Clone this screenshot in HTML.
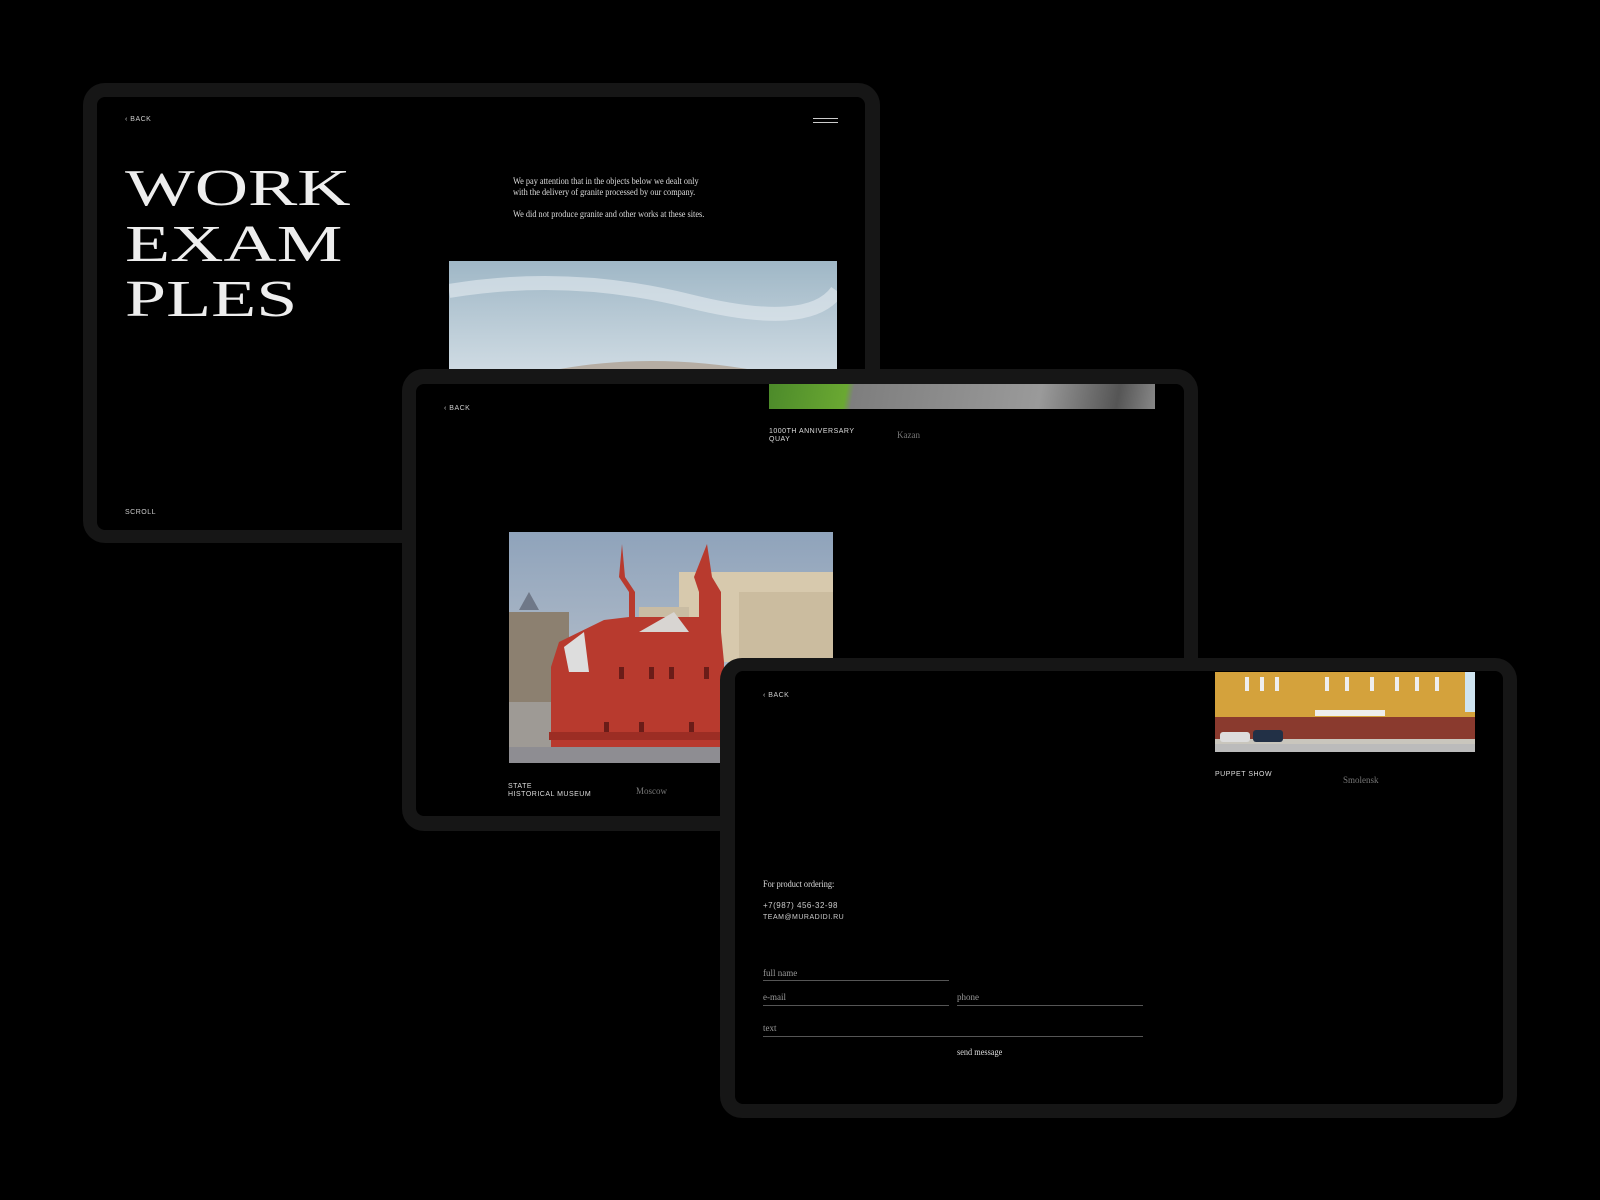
<!DOCTYPE html>
<html><head><meta charset="utf-8"><style>
*{margin:0;padding:0;box-sizing:border-box}
body{width:1600px;height:1200px;background:#000;position:relative;overflow:hidden;font-family:"Liberation Serif",serif;color:#ddd}
.frame{position:absolute;background:#161616;border-radius:22px}
.scr{position:absolute;background:#000;border-radius:8px;overflow:hidden}
.a{position:absolute;white-space:nowrap}
.sc{font-family:"Liberation Sans",sans-serif;font-size:7px;letter-spacing:.5px;color:#ccc}
.big{font-family:"Liberation Serif",serif;font-size:52px;line-height:56px;color:#eee;transform:scaleX(1.42);transform-origin:left top}
.p{font-size:9px;color:#ddd;transform:scaleX(.92);transform-origin:left top}
.gray{color:#777;font-size:9px}
.ln{position:absolute;height:1px;background:#555}
</style></head><body>

<!-- tablet 1 -->
<div class="frame" style="left:83px;top:83px;width:797px;height:460px"></div>
<div class="scr" style="left:97px;top:97px;width:768px;height:433px">
  <div class="a sc" style="left:28px;top:19px">‹ BACK</div>
  <div class="a" style="left:716px;top:21px;width:25px;height:1px;background:#ccc"></div>
  <div class="a" style="left:716px;top:25px;width:25px;height:1px;background:#ccc"></div>
  <div class="a big" style="left:28px;top:64px">WORK</div>
  <div class="a big" style="left:28px;top:120px">EXAM</div>
  <div class="a big" style="left:28px;top:175px">PLES</div>
  <div class="a p" style="left:416px;top:79px;line-height:11px">We pay attention that in the objects below we dealt only<br>with the delivery of granite processed by our company.<br><br>We did not produce granite and other works at these sites.</div>
  <svg class="a" style="left:352px;top:164px" width="388" height="110" viewBox="0 0 388 110">
    <defs><linearGradient id="s1" x1="0" y1="0" x2="0" y2="1"><stop offset="0" stop-color="#9fb7c6"/><stop offset="1" stop-color="#cfdbe3"/></linearGradient></defs>
    <rect width="388" height="110" fill="url(#s1)"/>
    <path d="M0 30 Q120 10 240 40 T388 30" stroke="#e4ebf0" stroke-width="14" fill="none" opacity=".6"/>
    <path d="M100 110 Q200 90 310 110Z" fill="#b5ada3"/>
  </svg>
  <div class="a sc" style="left:28px;top:412px">SCROLL</div>
</div>

<!-- tablet 2 -->
<div class="frame" style="left:402px;top:369px;width:796px;height:462px"></div>
<div class="scr" style="left:416px;top:384px;width:768px;height:432px">
  <div class="a sc" style="left:28px;top:21px">‹ BACK</div>
  <div class="a" style="left:353px;top:0;width:386px;height:25px;background:linear-gradient(100deg,#4c8a2a 0,#6aa832 20%,#7e7e7e 22%,#9a9a9a 70%,#555 90%,#888 100%)"></div>
  <div class="a sc" style="left:353px;top:44px;line-height:8px;color:#ddd">1000TH ANNIVERSARY<br>QUAY</div>
  <div class="a gray" style="left:481px;top:46px">Kazan</div>
  <svg class="a" style="left:93px;top:148px" width="324" height="231" viewBox="0 0 324 231">
    <defs><linearGradient id="s2" x1="0" y1="0" x2="0" y2="1"><stop offset="0" stop-color="#8fa3bb"/><stop offset="1" stop-color="#c7ccd2"/></linearGradient></defs>
    <rect width="324" height="231" fill="url(#s2)"/>
    <rect x="0" y="80" width="60" height="100" fill="#8c8070"/>
    <path d="M10 78 L20 60 L30 78Z" fill="#6f7888"/>
    <rect x="170" y="40" width="154" height="90" fill="#d7c9ad"/>
    <rect x="230" y="60" width="94" height="70" fill="#cbbc9f"/>
    <rect x="130" y="75" width="50" height="30" fill="#c9bca3"/>
    <rect x="0" y="170" width="50" height="61" fill="#9e9a95"/>
    <path d="M42 135 L50 110 L95 88 L120 85 L120 60 L110 45 L113 12 L116 45 L126 60 L126 85 L170 85 L190 85 L190 60 L185 45 L198 12 L203 45 L212 60 L212 100 L215 130 L215 218 L42 218Z" fill="#b83a2e"/>
    <path d="M130 100 L165 80 L180 100Z" fill="#d8d5d2"/>
    <path d="M55 115 L75 100 L80 140 L60 140Z" fill="#ddd"/>
    <rect x="40" y="200" width="180" height="8" fill="#9c2d24"/>
    <rect x="0" y="215" width="324" height="16" fill="#8e8d92"/>
    <g fill="#6a1c18"><rect x="110" y="135" width="5" height="12"/><rect x="140" y="135" width="5" height="12"/><rect x="160" y="135" width="5" height="12"/><rect x="195" y="135" width="5" height="12"/><rect x="95" y="190" width="5" height="10"/><rect x="130" y="190" width="5" height="10"/><rect x="180" y="190" width="5" height="10"/></g>
  </svg>
  <div class="a sc" style="left:92px;top:399px;line-height:8px;color:#ddd">STATE<br>HISTORICAL MUSEUM</div>
  <div class="a gray" style="left:220px;top:402px">Moscow</div>
</div>

<!-- tablet 3 -->
<div class="frame" style="left:720px;top:658px;width:797px;height:460px"></div>
<div class="scr" style="left:735px;top:671px;width:768px;height:433px">
  <div class="a sc" style="left:28px;top:21px">‹ BACK</div>
  <svg class="a" style="left:480px;top:1px" width="260" height="80" viewBox="0 0 260 80">
    <rect width="260" height="80" fill="#c9c6bd"/>
    <rect x="0" y="0" width="260" height="45" fill="#d4a23c"/>
    <rect x="0" y="45" width="260" height="22" fill="#8a3a2e"/>
    <g fill="#eee"><rect x="30" y="5" width="4" height="14"/><rect x="45" y="5" width="4" height="14"/><rect x="60" y="5" width="4" height="14"/><rect x="110" y="5" width="4" height="14"/><rect x="130" y="5" width="4" height="14"/><rect x="155" y="5" width="4" height="14"/><rect x="180" y="5" width="4" height="14"/><rect x="200" y="5" width="4" height="14"/><rect x="220" y="5" width="4" height="14"/><rect x="100" y="38" width="70" height="6"/></g>
    <rect x="250" y="0" width="10" height="40" fill="#cfe4f0"/>
    <rect x="38" y="58" width="30" height="12" rx="3" fill="#223046"/>
    <rect x="5" y="60" width="30" height="10" rx="3" fill="#ddd"/>
    <rect x="0" y="72" width="260" height="8" fill="#bbb"/>
  </svg>
  <div class="a sc" style="left:480px;top:100px;color:#ddd">PUPPET SHOW</div>
  <div class="a gray" style="left:608px;top:104px">Smolensk</div>
  <div class="a p" style="left:28px;top:208px">For product ordering:</div>
  <div class="a sc" style="left:28px;top:230px;font-size:8px">+7(987) 456-32-98</div>
  <div class="a sc" style="left:28px;top:243px">TEAM@MURADIDI.RU</div>
  <div class="a gray" style="left:28px;top:297px;color:#999">full name</div>
  <div class="ln" style="left:28px;top:309px;width:186px"></div>
  <div class="a gray" style="left:28px;top:321px;color:#999">e-mail</div>
  <div class="ln" style="left:28px;top:334px;width:186px"></div>
  <div class="a gray" style="left:222px;top:321px;color:#999">phone</div>
  <div class="ln" style="left:222px;top:334px;width:186px"></div>
  <div class="a gray" style="left:28px;top:352px;color:#999">text</div>
  <div class="ln" style="left:28px;top:365px;width:380px"></div>
  <div class="a p" style="left:222px;top:376px">send message</div>
</div>
</body></html>
